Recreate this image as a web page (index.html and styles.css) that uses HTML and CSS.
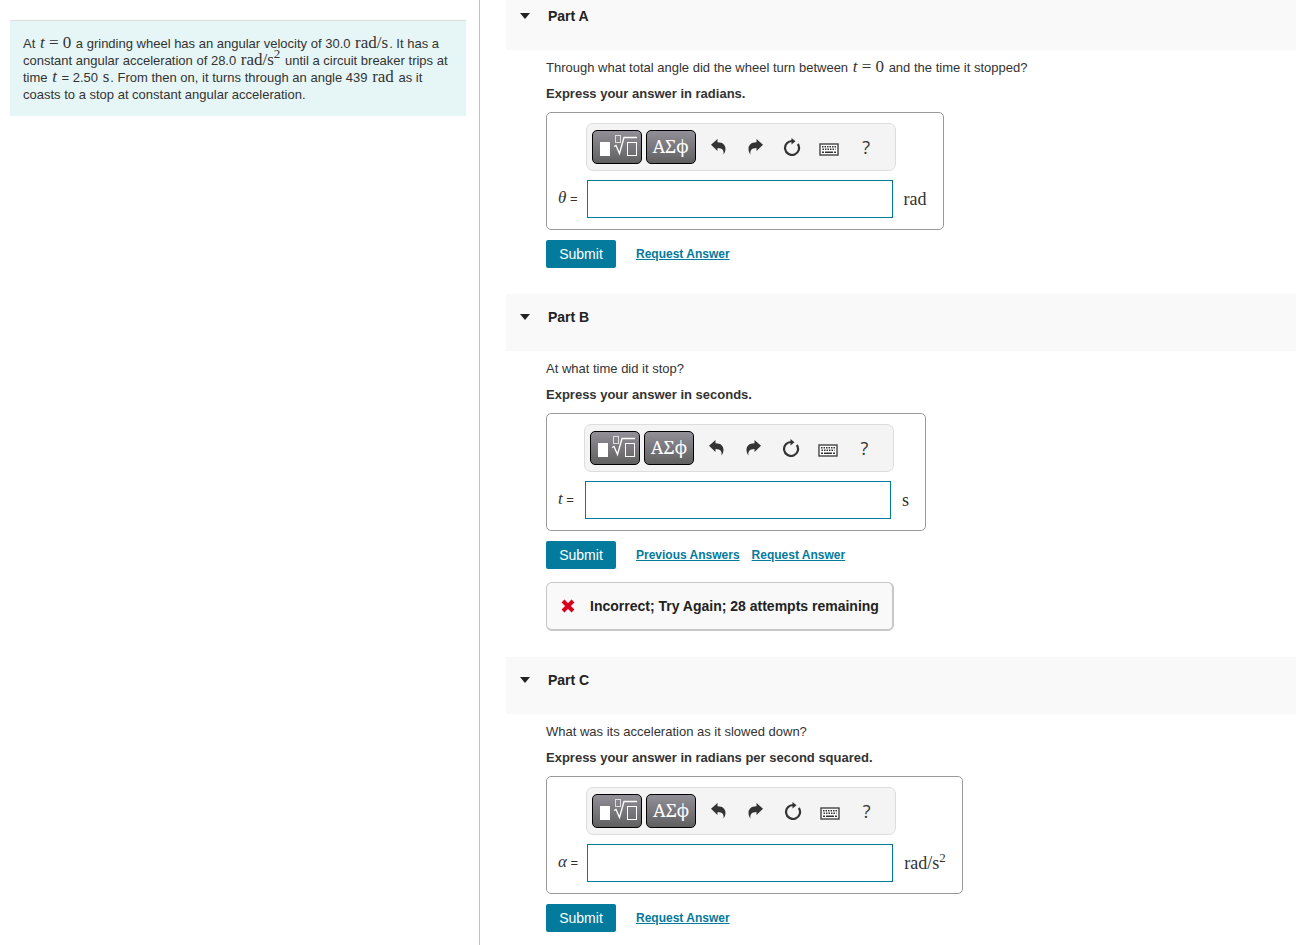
FILE: index.html
```html
<!DOCTYPE html>
<html lang="en">
<head>
    <meta charset="UTF-8">
    <meta name="viewport" content="width=device-width, initial-scale=1.0">
    <title>Grinding Wheel</title>
    <link rel="stylesheet" href="styles.css">
</head>
<body>
    <!-- Shared icons -->
    <svg class="sprite" aria-hidden="true">
        <symbol id="icon-template" viewBox="0 0 40 24">
            <rect x="3" y="8" width="10" height="14" fill="#fff"/>
            <rect x="18.500" y="1.500" width="5" height="7" fill="none" stroke="#ddd"/>
            <path d="M17 12.500l2-1 3.500 8L27 3.500H40" fill="none" stroke="#fff" stroke-width="1.300"/>
            <rect x="30.500" y="8.500" width="9" height="13" fill="none" stroke="#fff"/>
        </symbol>
        <symbol id="icon-undo" viewBox="0 0 15 16">
            <path d="M0 5.700L6.500 0v3.200C12 3.200 14.500 6 14.500 10c0 2-.8 4-2 5.500.6-4-.8-6.300-6-6.500v3z"/>
        </symbol>
        <symbol id="icon-redo" viewBox="0 0 15 16">
            <path d="M15 5.700L8.500 0v3.200C3 3.200.5 6 .5 10c0 2 .8 4 2 5.500-.6-4 .8-6.300 6-6.500v3z"/>
        </symbol>
        <symbol id="icon-reset" viewBox="0 0 18 18">
            <path d="M14.800 6A7 7 0 1 1 9.500 3" fill="none" stroke="#333" stroke-width="2.200"/>
            <path d="M8.500 0l4 3.200-4 3.300z"/>
        </symbol>
        <symbol id="icon-keyboard" viewBox="0 0 20 13">
            <rect x="1" y="1" width="18" height="11" fill="#fff" stroke="#444" stroke-width="1.400"/>
            <path d="M3 3.800h14M3.500 6.300h13" fill="none" stroke="#333" stroke-width="1.400" stroke-dasharray="1.500 1"/>
            <path d="M3 9.300h2M6 9.300h8M15 9.300h2" fill="none" stroke="#333" stroke-width="1.400"/>
        </symbol>
    </svg>

    <div class="page">
        <aside class="problem">
            <p class="problem-text">At <span class="math"><i>t</i> = 0</span> a grinding wheel has an angular velocity of 30.0 <span class="math">rad/s</span>. It has a constant angular acceleration of 28.0 <span class="math">rad/s<sup>2</sup></span> until a circuit breaker trips at time <i class="math">t</i> = 2.50 <span class="math">s</span>. From then on, it turns through an angle 439 <span class="math">rad</span> as it coasts to a stop at constant angular acceleration.</p>
        </aside>

        <main class="parts">
            <section class="part">
                <h2 class="part-header"><button type="button" class="part-toggle">Part A</button></h2>
                <div class="part-body">
                    <p class="question">Through what total angle did the wheel turn between <span class="math"><i>t</i> = 0</span> and the time it stopped?</p>
                    <p class="instructions">Express your answer in radians.</p>
                    <div class="answer-box">
                        <div class="toolbar">
                            <button type="button" class="tool-dark" aria-label="Templates"><svg class="icon-template"><use href="#icon-template"/></svg></button>
                            <button type="button" class="tool-dark">ΑΣϕ</button>
                            <button type="button" class="tool" aria-label="Undo"><svg width="15" height="16"><use href="#icon-undo"/></svg></button>
                            <button type="button" class="tool" aria-label="Redo"><svg width="15" height="16"><use href="#icon-redo"/></svg></button>
                            <button type="button" class="tool" aria-label="Reset"><svg width="18" height="18"><use href="#icon-reset"/></svg></button>
                            <button type="button" class="tool" aria-label="Keyboard"><svg class="icon-keyboard"><use href="#icon-keyboard"/></svg></button>
                            <button type="button" class="tool">?</button>
                        </div>
                        <label class="symbol" for="answerA"><i class="math">θ</i> =</label>
                        <input class="answer" type="text" id="answerA">
                        <span class="unit">rad</span>
                    </div>
                    <div class="actions">
                        <button type="submit" class="submit">Submit</button>
                        <a href="#">Request Answer</a>
                    </div>
                </div>
            </section>

            <section class="part">
                <h2 class="part-header"><button type="button" class="part-toggle">Part B</button></h2>
                <div class="part-body">
                    <p class="question">At what time did it stop?</p>
                    <p class="instructions">Express your answer in seconds.</p>
                    <div class="answer-box">
                        <div class="toolbar">
                            <button type="button" class="tool-dark" aria-label="Templates"><svg class="icon-template"><use href="#icon-template"/></svg></button>
                            <button type="button" class="tool-dark">ΑΣϕ</button>
                            <button type="button" class="tool" aria-label="Undo"><svg width="15" height="16"><use href="#icon-undo"/></svg></button>
                            <button type="button" class="tool" aria-label="Redo"><svg width="15" height="16"><use href="#icon-redo"/></svg></button>
                            <button type="button" class="tool" aria-label="Reset"><svg width="18" height="18"><use href="#icon-reset"/></svg></button>
                            <button type="button" class="tool" aria-label="Keyboard"><svg class="icon-keyboard"><use href="#icon-keyboard"/></svg></button>
                            <button type="button" class="tool">?</button>
                        </div>
                        <label class="symbol" for="answerB"><i class="math">t</i> =</label>
                        <input class="answer" type="text" id="answerB">
                        <span class="unit">s</span>
                    </div>
                    <div class="actions">
                        <button type="submit" class="submit">Submit</button>
                        <a href="#">Previous Answers</a>
                        <a href="#">Request Answer</a>
                    </div>
                    <div class="feedback">
                        <svg width="14" height="14" viewBox="0 0 14 14"><path d="M2 2l10 10M12 2L2 12" stroke="#d9001f" stroke-width="4"/></svg>
                        <span>Incorrect; Try Again; 28 attempts remaining</span>
                    </div>
                </div>
            </section>

            <section class="part">
                <h2 class="part-header"><button type="button" class="part-toggle">Part C</button></h2>
                <div class="part-body">
                    <p class="question">What was its acceleration as it slowed down?</p>
                    <p class="instructions">Express your answer in radians per second squared.</p>
                    <div class="answer-box">
                        <div class="toolbar">
                            <button type="button" class="tool-dark" aria-label="Templates"><svg class="icon-template"><use href="#icon-template"/></svg></button>
                            <button type="button" class="tool-dark">ΑΣϕ</button>
                            <button type="button" class="tool" aria-label="Undo"><svg width="15" height="16"><use href="#icon-undo"/></svg></button>
                            <button type="button" class="tool" aria-label="Redo"><svg width="15" height="16"><use href="#icon-redo"/></svg></button>
                            <button type="button" class="tool" aria-label="Reset"><svg width="18" height="18"><use href="#icon-reset"/></svg></button>
                            <button type="button" class="tool" aria-label="Keyboard"><svg class="icon-keyboard"><use href="#icon-keyboard"/></svg></button>
                            <button type="button" class="tool">?</button>
                        </div>
                        <label class="symbol" for="answerC"><i class="math">α</i> =</label>
                        <input class="answer" type="text" id="answerC">
                        <span class="unit">rad/s<sup>2</sup></span>
                    </div>
                    <div class="actions">
                        <button type="submit" class="submit">Submit</button>
                        <a href="#">Request Answer</a>
                    </div>
                </div>
            </section>
        </main>
    </div>
</body>
</html>
```
FILE: styles.css
```css
* {
    box-sizing: border-box;
}
body {
    margin: 0;
    font-family: "Liberation Sans", Arial, sans-serif;
    font-size: 13px;
    line-height: 16px;
    color: #333;
    background-color: #fff;
}
h2, p {
    margin: 0;
}
button {
    padding: 0;
    border: none;
    background: none;
    font-family: inherit;
    color: inherit;
    cursor: pointer;
}
svg {
    display: block;
    fill: #333;
}
.sprite {
    display: none;
}
.page {
    display: flex;
    height: 100vh;
    overflow: hidden;
}

/* Left pane */
.problem {
    flex: 0 0 480px;
    padding: 20px 13px 0 10px;
    border-right: 1px solid #b9c3cf;
}
.problem-text {
    padding: 14px 13px 13px;
    border-top: 1px solid #ddd;
    background-color: #e6f6f6;
    line-height: 17px;
}
.math {
    margin: 0 1px;
    font-family: "Liberation Serif", "Times New Roman", serif;
    font-size: 17px;
    line-height: 0;
}
sup {
    font-size: 13px;
    line-height: 0;
}

/* Right pane */
.parts {
    flex: 1;
    min-width: 0;
    padding-left: 26px;
}
.part-header {
    padding: 15px 14px 26px;
    background-color: #f9f9f9;
    line-height: 16px;
}
.part:first-child .part-header {
    padding-top: 8px;
}
.part-toggle {
    display: flex;
    align-items: center;
    gap: 18px;
    font-size: 14px;
    line-height: 16px;
    font-weight: bold;
    color: #222;
}
.part-toggle::before {
    content: "";
    border: 5px solid transparent;
    border-top: 6px solid #222;
    border-bottom: none;
}
.part-body {
    padding: 10px 40px 26px;
}
.instructions {
    margin: 10px 0;
    font-weight: bold;
}
.answer-box {
    display: grid;
    grid-template-columns: auto 310px auto;
    column-gap: 8px;
    row-gap: 9px;
    align-items: center;
    width: fit-content;
    padding: 10px 16px 11px 11px;
    border: 1px solid #999;
    border-radius: 5px;
}
.toolbar {
    grid-column: 2;
    display: flex;
    align-items: center;
    height: 48px;
    padding: 0 5px;
    border: 1px solid #ddd;
    border-radius: 7px;
    background-color: #f4f4f4;
}
.tool-dark {
    display: flex;
    align-items: center;
    justify-content: center;
    width: 50px;
    height: 34px;
    margin-right: 4px;
    padding-bottom: 2px;
    border: 1px solid #000;
    border-radius: 5px;
    background: linear-gradient(#928f98, #606060);
    font-family: "Noto Serif", "Liberation Serif", serif;
    font-size: 18px;
    color: #fff;
}
.icon-template {
    width: 40px;
    height: 24px;
}
.tool {
    display: flex;
    align-items: center;
    justify-content: center;
    width: 37px;
    height: 34px;
    font-family: "Open Sans", sans-serif;
    font-size: 18px;
}
.icon-keyboard {
    width: 20px;
    height: 13px;
    margin-top: 4px;
}
.symbol {
    grid-column: 1;
    min-width: 18px;
}
.symbol .math {
    margin: 0;
}
.unit {
    font-family: "Liberation Serif", "Times New Roman", serif;
    font-size: 18px;
}
.answer {
    width: 306px;
    height: 38px;
    margin-left: 1px;
    padding: 0 8px;
    border: 1px solid #047a9c;
    font-size: 16px;
}
.actions {
    display: flex;
    align-items: center;
    gap: 12px;
    margin-top: 10px;
}
.actions a {
    font-size: 12px;
    font-weight: bold;
    color: #047a9c;
}
.submit {
    width: 70px;
    height: 28px;
    margin-right: 8px;
    border-radius: 2px;
    background-color: #047a9c;
    font-size: 14px;
    color: #fff;
}
.feedback {
    display: flex;
    align-items: center;
    gap: 15px;
    width: fit-content;
    height: 49px;
    margin-top: 13px;
    padding: 0 13px 0 14px;
    border: 1px solid #c7c7c7;
    border-right-width: 2px;
    border-bottom-width: 2px;
    border-radius: 6px;
    background-color: #f9f9f9;
    font-size: 14px;
    font-weight: bold;
    color: #222;
}
```
